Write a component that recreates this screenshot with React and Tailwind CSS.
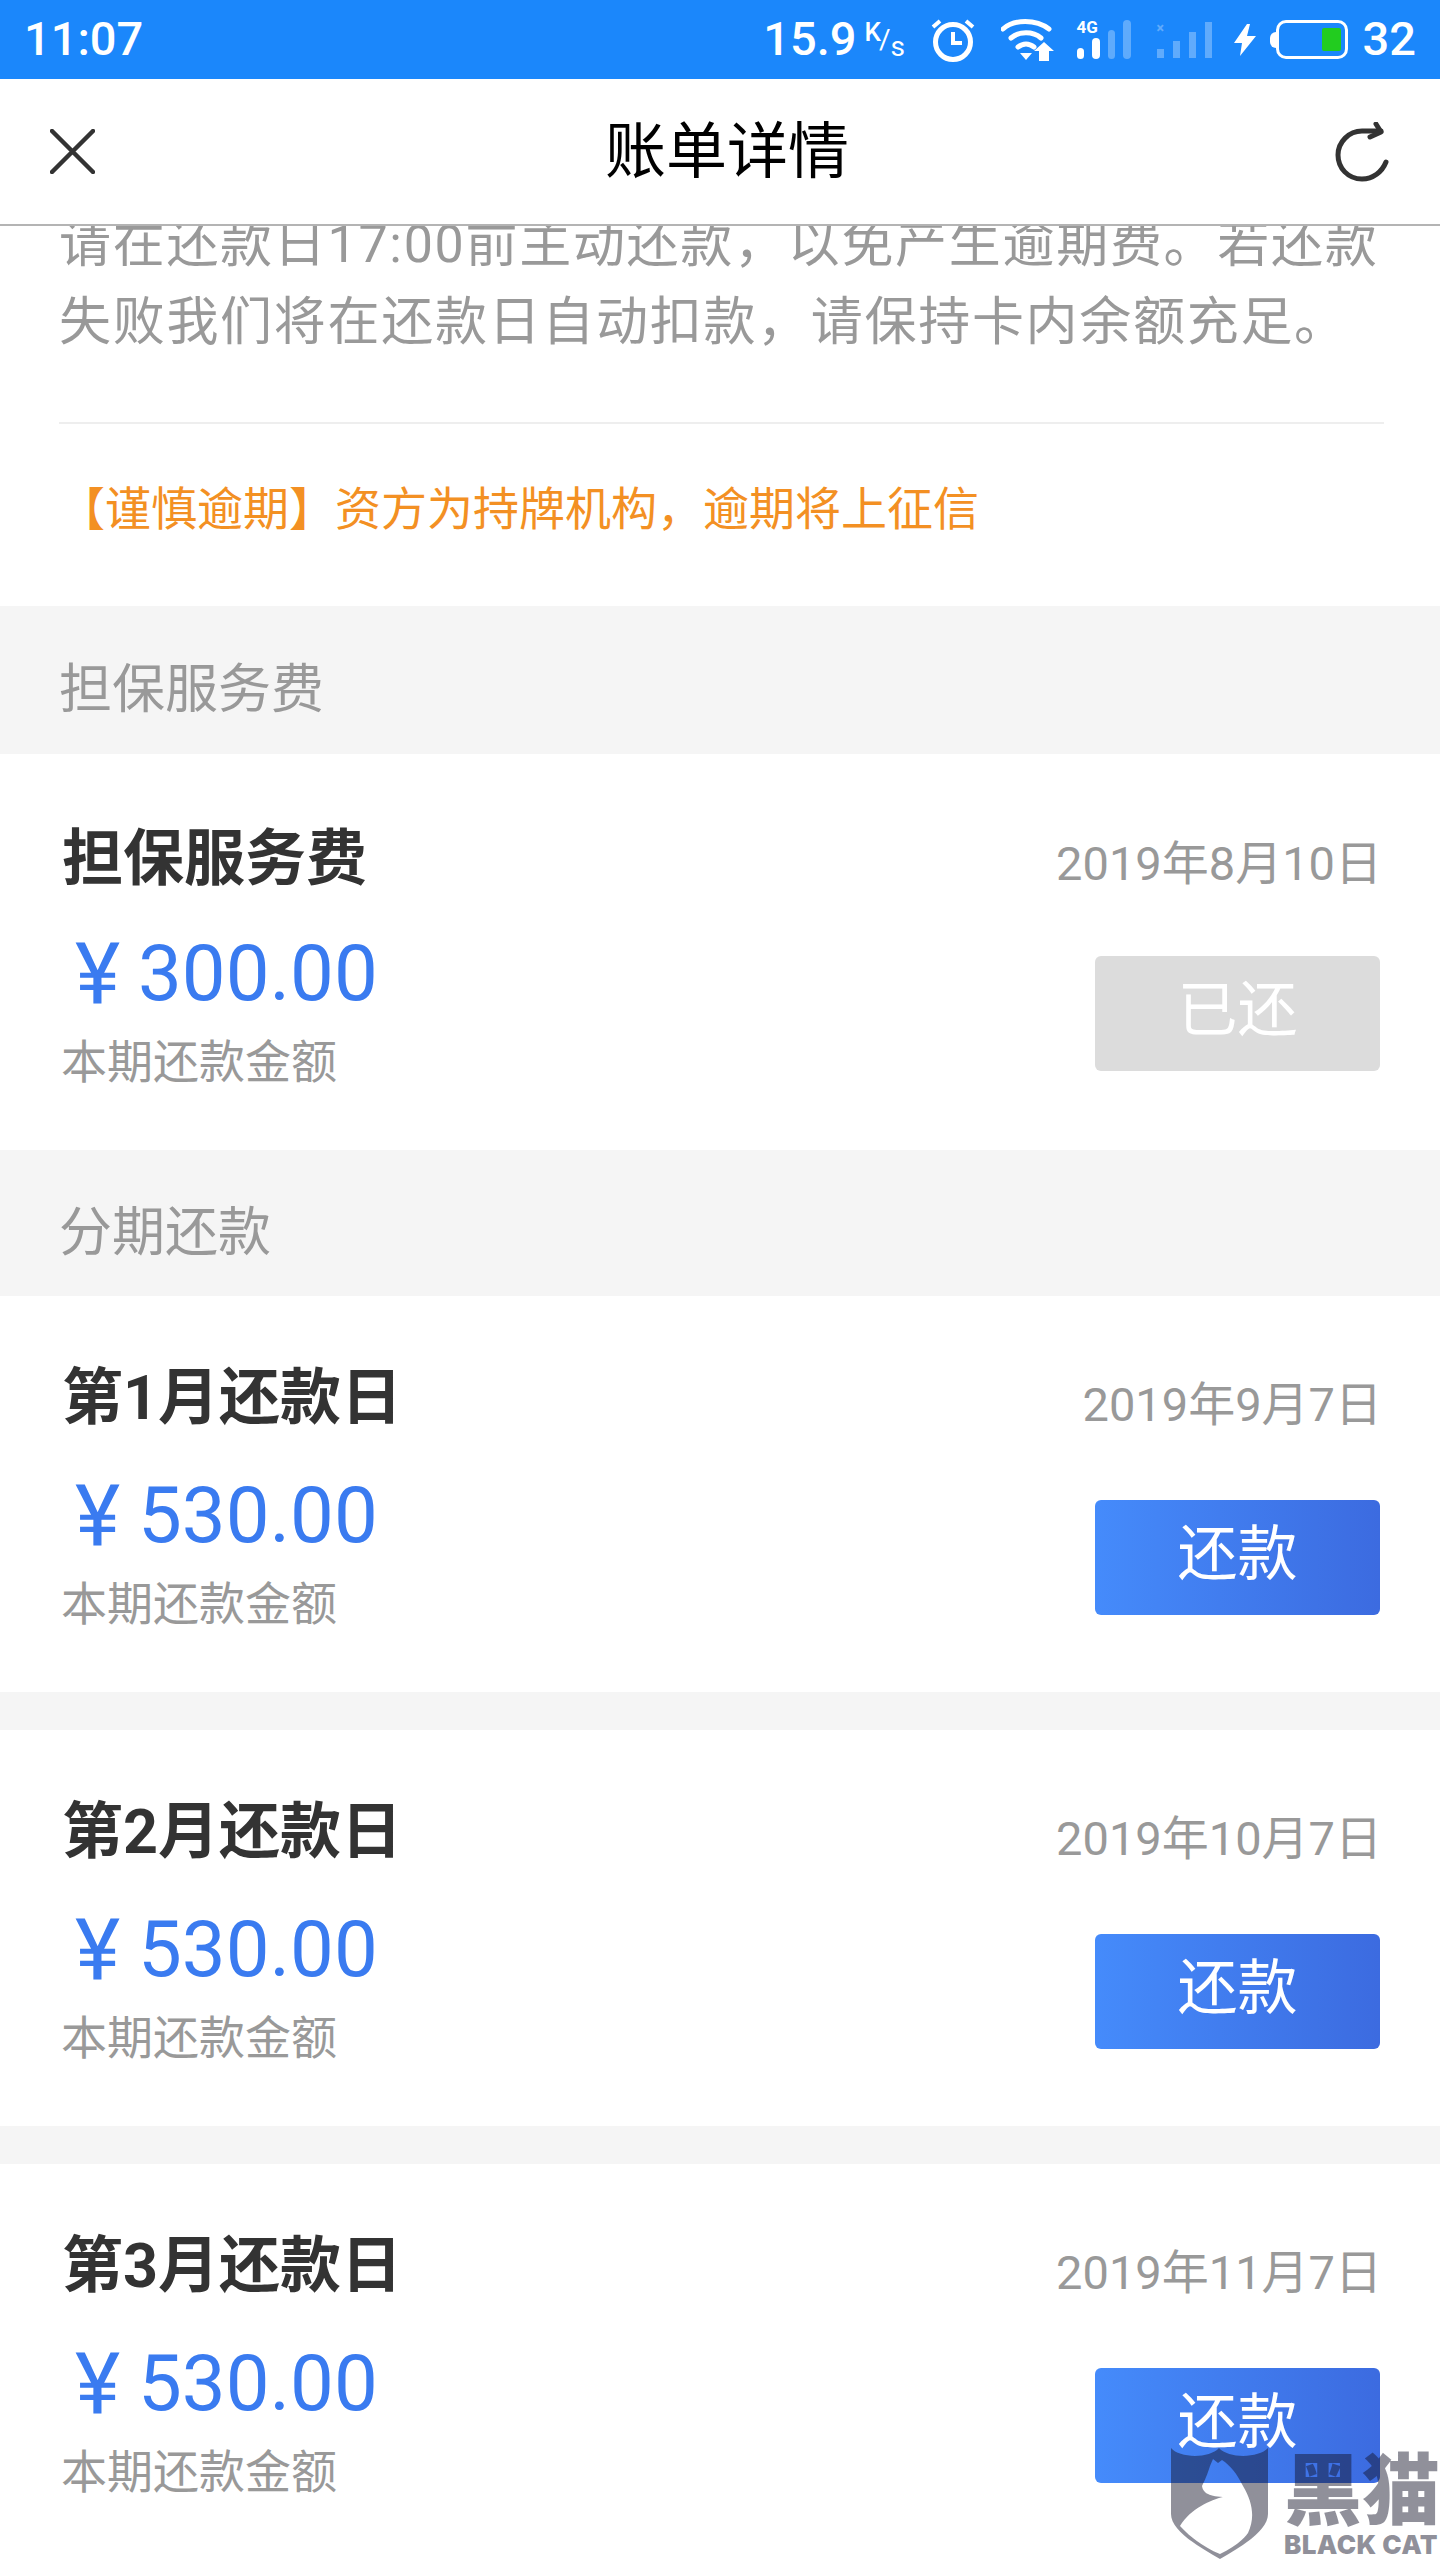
const bills = [
  { title: "第1月还款日", amount: "530.00", date: "2019年9月7日" },
  { title: "第2月还款日", amount: "530.00", date: "2019年10月7日" },
  { title: "第3月还款日", amount: "530.00", date: "2019年11月7日" },
];

export default function App() {
  return (
    <div className="relative h-[2560px] w-[1440px] overflow-hidden bg-white font-['Roboto','Noto_Sans_CJK_SC',sans-serif]">
      <StatusBar />
      <NavBar />

      {/* scrolled content, first line runs under the nav */}
      <div className="-mt-[20px]">
        <div className="px-[59px] text-[52px] leading-[78px] tracking-[1.7px] whitespace-nowrap text-[#999999]">
          <p>请在还款日17:00前主动还款，以免产生逾期费。若还款</p>
          <p>失败我们将在还款日自动扣款，请保持卡内余额充足。</p>
        </div>
        <div className="mt-[60px] mr-[56px] ml-[59px] h-[2px] bg-[#eeeeee]" />
        <p className="h-[182px] pt-[55px] pl-[59px] text-[46px] leading-[60px] whitespace-nowrap text-[#f39023]">
          【谨慎逾期】资方为持牌机构，逾期将上征信
        </p>

        <SectionHeader title="担保服务费" height="h-[148px]" />
        <BillCard title="担保服务费" amount="300.00" date="2019年8月10日" paid />
        <SectionHeader title="分期还款" height="h-[146px]" />
        {bills.map((bill, i) => (
          <div key={bill.title}>
            {i > 0 && <div className="h-[38px] bg-[#f5f5f5]" />}
            <BillCard {...bill} />
          </div>
        ))}
      </div>

      <Watermark />
    </div>
  );
}

function StatusBar() {
  return (
    <div className="flex h-[79px] items-center justify-between bg-[#1b87fb] pr-[24px] pl-[24px] font-medium text-white">
      <span className="-mt-[2px] text-[47px] leading-none">11:07</span>
      <div className="flex items-center">
        <span className="-mt-[2px] text-[47px] leading-none">15.9</span>
        <div className="ml-[8px] flex h-[42px] w-[42px] text-[26px] leading-none">
          <span className="self-start">K</span>
          <span className="-ml-[2px] self-center text-[28px] font-normal">/</span>
          <span className="self-end text-[28px] font-normal">s</span>
        </div>
        <AlarmIcon />
        <WifiIcon />
        <MobileSignal />
        <EmptySignal />
        <BoltIcon />
        <Battery />
        <span className="-mt-[2px] ml-[15px] text-[47px] leading-none">32</span>
      </div>
    </div>
  );
}

function AlarmIcon() {
  return (
    <svg className="ml-[24px]" width="44" height="44" viewBox="0 0 44 44" fill="none" stroke="white">
      <circle cx="22" cy="24" r="17.5" strokeWidth="5" />
      <path d="M22 14v11h9" strokeWidth="4" />
      <path d="M2 9 9 3M42 9l-7-6" strokeWidth="4" />
    </svg>
  );
}

function WifiIcon() {
  return (
    <svg className="ml-[26px]" width="53" height="43" viewBox="0 0 53 43" fill="none" stroke="white" strokeWidth="5">
      <path d="M2 11C13 1 35 1 48 11" strokeLinecap="round" />
      <path d="M10 20c8-7 22-7 30 0" strokeLinecap="round" />
      <path d="M17 29c5-4 11-4 16 0" strokeLinecap="round" />
      <path d="M19 35h12l-6 7z" fill="white" stroke="none" />
      <path d="M38 43V33h-5l10-9 10 9h-5v10z" fill="white" stroke="none" />
    </svg>
  );
}

function MobileSignal() {
  return (
    <div className="relative ml-[23px] flex h-[39px] w-[54px] items-end gap-[8px]">
      <span className="absolute top-0 left-0 text-[17px] leading-[15px] font-bold">4G</span>
      <div className="h-[11px] w-[8px] rounded-full bg-white" />
      <div className="h-[21px] w-[8px] rounded-full bg-white" />
      <div className="h-[29px] w-[8px] rounded-full bg-white/30" />
      <div className="h-[39px] w-[8px] rounded-full bg-white/30" />
    </div>
  );
}

function EmptySignal() {
  return (
    <div className="relative ml-[26px] flex h-[36px] w-[56px] items-end gap-[9px] opacity-30">
      <span className="absolute top-0 left-0 text-[14px] leading-[12px] font-bold">×</span>
      <div className="h-[9px] w-[7px] bg-white" />
      <div className="h-[17px] w-[7px] bg-white" />
      <div className="h-[26px] w-[7px] bg-white" />
      <div className="h-[36px] w-[7px] bg-white" />
    </div>
  );
}

function BoltIcon() {
  return (
    <svg className="ml-[21px]" width="22" height="32" viewBox="0 0 22 32" fill="white">
      <path d="M13 0 0 19h8l-2 13 16-20h-9l3-12z" />
    </svg>
  );
}

function Battery() {
  return (
    <div className="ml-[14px] flex items-center">
      <div className="h-[16px] w-[6px] rounded-l-full bg-white" />
      <div className="flex h-[39px] w-[72px] items-center justify-end rounded-[10px] border-[3px] border-white pr-[4px]">
        <div className="h-[23px] w-[19px] rounded-[2px] bg-[#22cc1f]" />
      </div>
    </div>
  );
}

function NavBar() {
  return (
    <div className="relative z-10 flex h-[147px] items-center justify-between border-b-2 border-[#b4b4b4] bg-white pr-[51px] pl-[50px]">
      <svg width="45" height="45" viewBox="0 0 45 45" fill="none" stroke="#333333" strokeWidth="4.5" strokeLinecap="round">
        <path d="M2 2 43 43M43 2 2 43" />
      </svg>
      <span className="mt-[2px] ml-[24px] text-[61px] leading-none text-black">账单详情</span>
      <svg width="54" height="60" viewBox="0 0 54 60" fill="none" stroke="#333333" strokeWidth="5" strokeLinecap="round" strokeLinejoin="round">
        <path d="M51 40C47 50 38 57 27 57 13 57 3 46 3 33 3 20 14 9 27 9h19" />
        <path d="M41 2l5 8-11 5" />
      </svg>
    </div>
  );
}

function SectionHeader({ title, height }) {
  return (
    <div className={`flex items-center bg-[#f5f5f5] pt-[22px] pl-[59px] text-[53px] text-[#999999] ${height}`}>
      {title}
    </div>
  );
}

function BillCard({ title, amount, date, paid }) {
  return (
    <div className="flex h-[396px] justify-between bg-white pr-[60px] pl-[62px]">
      <div>
        <h3 className={`text-[61px] leading-[80px] font-bold text-[#333333] ${paid ? "mt-[65px]" : "mt-[62px]"}`}>{title}</h3>
        <div className={`flex h-[88px] items-center pl-[13px] text-[78px] leading-none text-[#3a7bf0] ${paid ? "mt-[31px]" : "mt-[34px]"}`}>
          <span className="mr-[13px] w-[50px] text-[86px]">¥</span>
          {amount}
        </div>
        <p className="mt-[14px] -ml-[1px] text-[46px] leading-[60px] text-[#999999]">本期还款金额</p>
      </div>
      <div className="flex flex-col items-end">
        <span className={`-mr-[2px] text-[47px] leading-[60px] text-[#999999] ${paid ? "mt-[80px]" : "mt-[79px]"}`}>{date}</span>
        <button
          className={`h-[115px] w-[285px] rounded-[6px] pb-[6px] text-[60px] text-white ${
            paid ? "mt-[62px] bg-[#dcdcdc]" : "mt-[65px] bg-gradient-to-r from-[#458bfb] to-[#3c6be0]"
          }`}
        >
          {paid ? "已还" : "还款"}
        </button>
      </div>
    </div>
  );
}

function Watermark() {
  return (
    <div className="absolute top-[2448px] left-[1171px] flex text-[rgba(20,20,40,0.47)]">
      <svg width="97" height="111" viewBox="0 0 97 111" fill="rgba(20,20,40,0.47)">
        <path
          fillRule="evenodd"
          d="M0 0C8 10 38 11 48 0 58 11 88 10 97 0V66C97 82 72 98 49 111 26 98 0 82 0 66ZM42 11 39 18C37 24 36 28 31 38 32 44 36 48 52 49 40 52 20 60 9 78 20 90 34 100 49 106 62 100 72 92 77 85 84 70 82 55 72 38 66 26 60 18 51 12L47 15Z"
        />
      </svg>
      <div className="ml-[16px] flex flex-col">
        <span className="mt-[7px] h-[78px] text-[78px] leading-[76px] font-black whitespace-nowrap">黑猫</span>
        <span className="font-['Inter',sans-serif] text-[26px] leading-[24px] font-black tracking-[0.4px] whitespace-nowrap">BLACK CAT</span>
      </div>
    </div>
  );
}
